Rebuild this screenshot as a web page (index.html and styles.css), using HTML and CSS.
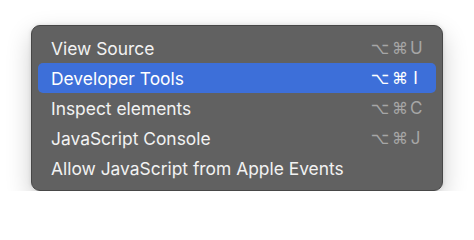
FILE: index.html
```html
<!DOCTYPE html>
<html>
<head>
<meta charset="utf-8">
<link rel="stylesheet" href="styles.css">
</head>
<body>
<div class="menu">
  <div class="item"><span class="label">View Source</span><span class="keys"><span class="k opt">⌥</span><span class="k cmd">⌘</span><span class="k key">U</span></span></div>
  <div class="item active"><span class="label">Developer Tools</span><span class="keys"><span class="k opt">⌥</span><span class="k cmd">⌘</span><span class="k key">I</span></span></div>
  <div class="item"><span class="label">Inspect elements</span><span class="keys"><span class="k opt">⌥</span><span class="k cmd">⌘</span><span class="k key">C</span></span></div>
  <div class="item"><span class="label">JavaScript Console</span><span class="keys"><span class="k opt">⌥</span><span class="k cmd">⌘</span><span class="k key">J</span></span></div>
  <div class="item"><span class="label">Allow JavaScript from Apple Events</span></div>
</div>
</body>
</html>
```
FILE: styles.css
```css
html, body {
  margin: 0;
  padding: 0;
  background: #ffffff;
}
body {
  padding: 25px 0 0 31px;
  font-family: "Inter", "Liberation Sans", sans-serif;
}
.menu {
  box-sizing: border-box;
  width: 412px;
  height: 166px;
  background: #616161;
  border: 1px solid #474747;
  border-radius: 9px;
  padding: 7px 6px;
  box-shadow: 0 10px 26px rgba(0, 0, 0, 0.2), 0 0 4px rgba(0, 0, 0, 0.12);
}
.item {
  display: flex;
  align-items: center;
  justify-content: space-between;
  height: 30px;
  padding: 0 15px 0 13px;
  border-radius: 5px;
  color: #f2f2f2;
  font-size: 17.4px;
}
.item.active {
  background: #3d6fd9;
  color: #ffffff;
}
.keys {
  display: flex;
  align-items: center;
  color: #a6a6a6;
  font-family: "DejaVu Sans", sans-serif;
  font-size: 16px;
}
.active .keys {
  color: #ffffff;
}
.k {
  display: inline-block;
  text-align: center;
}
.opt { width: 20px; }
.cmd { width: 20px; }
.key { width: 11px; font-family: "Inter", sans-serif; font-size: 17px; }
```
